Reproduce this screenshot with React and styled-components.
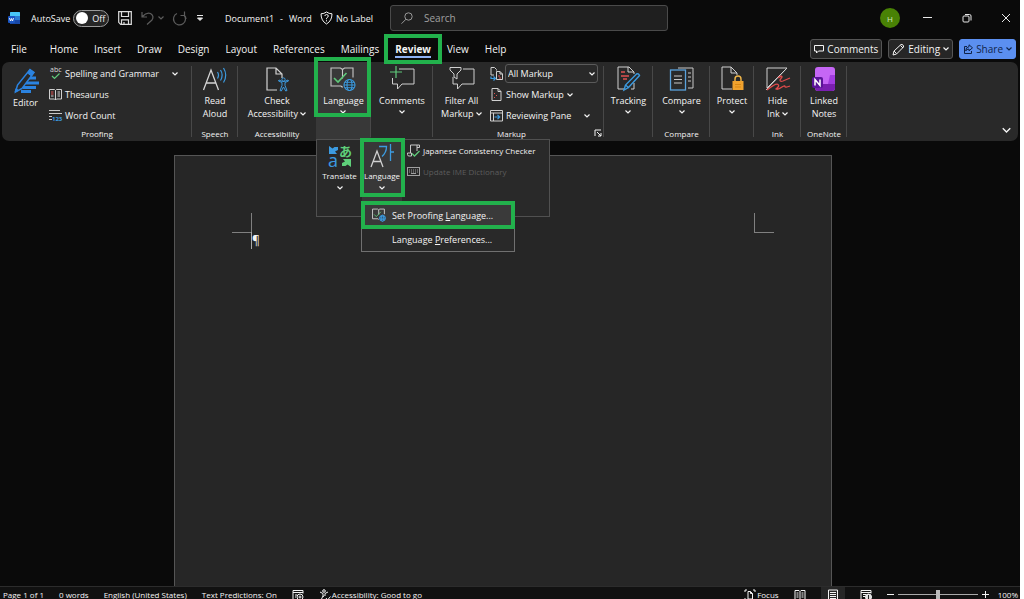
import styled, { createGlobalStyle } from "styled-components"

const TABS_BEFORE = ["Home", "Insert", "Draw", "Design", "Layout", "References", "Mailings"]
const TABS_AFTER = ["View", "Help"]

export default function App() {
  return (
    <>
      <GlobalStyle />
      <AppStyled>
        <TitleBar />
        <TabBar />
        <Ribbon />
        <Workspace>
          <Sheet>
            <Corner />
            <Paragraph>¶</Paragraph>
            <Corner $right />
          </Sheet>
        </Workspace>
        <StatusBar />
      </AppStyled>
    </>
  )
}

function TitleBar() {
  return (
    <TitleBarStyled>
      <QuickAccess>
        <WordLogo />
        <AutoSave>
          AutoSave
          <Toggle>
            <input type="checkbox" role="switch" />
            Off
          </Toggle>
        </AutoSave>
        <IconButton aria-label="Save"><SaveIcon /></IconButton>
        <IconButton aria-label="Undo" $dim>
          <UndoIcon />
          <Chevron />
        </IconButton>
        <IconButton aria-label="Redo" $dim><RedoIcon /></IconButton>
        <IconButton aria-label="Customize Quick Access Toolbar"><CustomizeIcon /></IconButton>
      </QuickAccess>
      <DocTitle>
        <span>Document1</span>
        <span>-</span>
        <span>Word</span>
      </DocTitle>
      <LabelButton><ShieldIcon />No Label</LabelButton>
      <SearchBox>
        <SearchIcon />
        <input type="text" placeholder="Search" aria-label="Search" />
      </SearchBox>
      <WindowControls>
        <Avatar aria-label="Account">H</Avatar>
        <IconButton aria-label="Minimize">
          <Svg w={10} h={10}><path d="M0 4.500h9" /></Svg>
        </IconButton>
        <IconButton aria-label="Restore">
          <Svg w={10} h={10}>
            <rect x="1" y="3" width="6" height="6" rx="1" />
            <path d="M3 1.5h4.5a1.5 1.5 0 0 1 1.5 1.5v4.5" />
          </Svg>
        </IconButton>
        <IconButton aria-label="Close">
          <Svg w={10} h={10}><path d="M1 1l8 8M9 1l-8 8" /></Svg>
        </IconButton>
      </WindowControls>
    </TitleBarStyled>
  )
}

function TabBar() {
  return (
    <TabBarStyled>
      <Tabs>
        <Tab $wide>File</Tab>
        {TABS_BEFORE.map((tab) => (
          <Tab key={tab}>{tab}</Tab>
        ))}
        <Tab $active>Review</Tab>
        {TABS_AFTER.map((tab) => (
          <Tab key={tab}>{tab}</Tab>
        ))}
      </Tabs>
      <TabActions>
        <ActionButton>
          <Svg w={10} h={10}><path d="M.5 1.5h9v5.5h-5l-2 2v-2h-2z" /></Svg>
          Comments
        </ActionButton>
        <ActionButton>
          <Svg w={13} h={13}><path d="M1 12l1-4 7-6.500q2-.5 2.500 1.500v1l-7 7zM8.500 2.500l2.500 2.500M2 8l2.500 2.500" /></Svg>
          Editing
          <Chevron />
        </ActionButton>
        <ActionButton $primary>
          <Svg w={10} h={10}><path d="M4 2.500h-2.500v7h7v-2.500M6 .8l3.500 3-3.500 3v-1.800q-2.500 0-3.300 2 0-4 3.300-4.300z" /></Svg>
          Share
          <Chevron />
        </ActionButton>
      </TabActions>
    </TabBarStyled>
  )
}

function Ribbon() {
  return (
    <RibbonStyled>
      <Group $width={190}>
        <GroupBody>
          <BigButton $width={47}><EditorIcon />Editor</BigButton>
          <SmallList>
            <SmallButton>
              <SpellingIcon />Spelling and Grammar
              <SplitArrow><Chevron /></SplitArrow>
            </SmallButton>
            <SmallButton><ThesaurusIcon />Thesaurus</SmallButton>
            <SmallButton><WordCountIcon />Word Count</SmallButton>
          </SmallList>
        </GroupBody>
        <GroupLabel>Proofing</GroupLabel>
      </Group>

      <Group $width={46}>
        <GroupBody>
          <BigButton><ReadAloudIcon /><span>Read</span><span>Aloud</span></BigButton>
        </GroupBody>
        <GroupLabel>Speech</GroupLabel>
      </Group>

      <Group $width={78} $plain>
        <GroupBody>
          <BigButton>
            <AccessibilityPageIcon />
            <span>Check</span>
            <span>Accessibility <Chevron /></span>
          </BigButton>
        </GroupBody>
        <GroupLabel>Accessibility</GroupLabel>
      </Group>

      <Group $width={55} $open>
        <GroupBody>
          <BigButton><ProofingIcon w={26} h={26} />Language<Chevron /></BigButton>
        </GroupBody>
        <Highlight $inset="-5px 0 22px -2px" />
        <LanguageFlyout />
      </Group>

      <Group $width={62}>
        <GroupBody><BigButton><NewCommentIcon />Comments<Chevron /></BigButton></GroupBody>
      </Group>

      <Group $width={171}>
        <GroupBody>
          <BigButton $width={57}>
            <FilterIcon />
            <span>Filter All</span>
            <span>Markup <Chevron /></span>
          </BigButton>
          <SmallList>
            <MarkupRow>
              <MarkupPagesIcon />
              <SelectBox>
                <select aria-label="Display for Review" defaultValue="all">
                  <option value="all">All Markup</option>
                </select>
                <Chevron />
              </SelectBox>
            </MarkupRow>
            <SmallButton><ShowMarkupIcon />Show Markup <Chevron /></SmallButton>
            <SmallButton>
              <PaneIcon />Reviewing Pane
              <SplitArrow><Chevron /></SplitArrow>
            </SmallButton>
          </SmallList>
        </GroupBody>
        <GroupLabel $launcher>
          Markup
          <Launcher aria-label="Change Tracking Options">
            <Svg w={8} h={8}><path d="M1 7v-6h6M3 3l4 4M7 4v3h-3" /></Svg>
          </Launcher>
        </GroupLabel>
      </Group>

      <Group $width={49}>
        <GroupBody><BigButton><TrackingIcon />Tracking<Chevron /></BigButton></GroupBody>
      </Group>
      <Group $width={57}>
        <GroupBody><BigButton><CompareIcon />Compare<Chevron /></BigButton></GroupBody>
        <GroupLabel>Compare</GroupLabel>
      </Group>
      <Group $width={44}>
        <GroupBody><BigButton><ProtectIcon />Protect<Chevron /></BigButton></GroupBody>
      </Group>
      <Group $width={47}>
        <GroupBody>
          <BigButton><InkIcon /><span>Hide</span><span>Ink <Chevron /></span></BigButton>
        </GroupBody>
        <GroupLabel>Ink</GroupLabel>
      </Group>
      <Group $width={46}>
        <GroupBody>
          <BigButton><OneNoteIcon /><span>Linked</span><span>Notes</span></BigButton>
        </GroupBody>
        <GroupLabel>OneNote</GroupLabel>
      </Group>

      <Collapse aria-label="Collapse the Ribbon"><Chevron size={9} /></Collapse>
    </RibbonStyled>
  )
}

function LanguageFlyout() {
  return (
    <Flyout>
      <FlyoutButton $width={45}><TranslateIcon />Translate<Chevron /></FlyoutButton>
      <FlyoutAnchor>
        <FlyoutButton $width={40} $open><LanguageIcon />Language<Chevron /></FlyoutButton>
        <Highlight $inset="-2px -3px 19px -2px" />
        <Menu>
          <MenuItem $active>
            <ProofingIcon w={14} h={14} />
            <span>Set Proofing <u>L</u>anguage...</span>
            <Highlight $inset="-1px" />
          </MenuItem>
          <MenuItem>
            <i />
            <span>Language <u>P</u>references...</span>
          </MenuItem>
        </Menu>
      </FlyoutAnchor>
      <FlyoutList>
        <FlyoutItem>
          <Svg w={13} h={13} color="#c8c8c8">
            <path d="M3.500 9v-8h9v2.500h-2.500M10 1v6M.5 9h4v3h-2.500q-1.500 0-1.500-1.500z" />
            <path d="M5 9.500l2.500 2.500 5-5" stroke="#5fc97a" strokeWidth="1.300" />
          </Svg>
          Japanese Consistency Checker
        </FlyoutItem>
        <FlyoutItem disabled>
          <Svg w={13} h={13} color="#a0a0a0">
            <rect x=".5" y="2.500" width="12" height="8" />
            <path d="M2 5h1M4 5h1M6 5h1M8 5h1M10 5h1M2 7h1M4 7h1M6 7h1M8 7h1M10 7h1M4 8.500h5" />
          </Svg>
          Update IME Dictionary
        </FlyoutItem>
      </FlyoutList>
    </Flyout>
  )
}

function StatusBar() {
  return (
    <StatusBarStyled>
      <StatusInner>
        <StatusButton>Page 1 of 1</StatusButton>
        <StatusButton>0 words</StatusButton>
        <StatusButton>English (United States)</StatusButton>
        <StatusButton>Text Predictions: On</StatusButton>
        <StatusButton aria-label="Macro recording">
          <Svg w={12} h={12}>
            <path d="M4 11h-3v-9.500h10v3M1 3.500h10M3 6h2M3 8h1" />
            <circle cx="8" cy="8" r="3" /><circle cx="8" cy="8" r="1" />
          </Svg>
        </StatusButton>
        <StatusButton>
          <Svg w={12} h={12}>
            <circle cx="5" cy="2" r="1.300" />
            <path d="M1 3l3 1.500v2.500l-2 4M9 3l-3 1.500v2.500M4 8l1-1.500M7 9l1.500 2 3-3.500" />
          </Svg>
          Accessibility: Good to go
        </StatusButton>
        <StatusRight>
          <StatusButton>
            <Svg w={12} h={12}>
              <path d="M1 3v-2h2M9 1h2v2M1 9v2h2M4 2.500h2.500l2 2v5.500h-4.500zM6.500 2.500v2h2" />
            </Svg>
            Focus
          </StatusButton>
          <ViewButton aria-label="Read Mode">
            <Svg w={12} h={12}>
              <path d="M6 2.500v8M1 1.500h4l1 1 1-1h4v9h-4l-1 .5-1-.5h-4zM2.500 4h2M2.500 6h2M2.500 8h2M7.500 4h2M7.500 6h2M7.500 8h2" />
            </Svg>
          </ViewButton>
          <ViewButton aria-label="Print Layout" $active>
            <Svg w={12} h={12}>
              <path d="M1.500 1h9v10h-9zM3 3.500h6M3 5.500h6M3 7.500h6M3 9.500h6" />
            </Svg>
          </ViewButton>
          <ViewButton aria-label="Web Layout">
            <Svg w={12} h={12}>
              <path d="M5 10.500h-4v-9h10v3M1 3.500h10M3 5.500h3M3 7.500h2" />
              <circle cx="8.500" cy="8" r="3" fill="#ddd" />
              <path d="M8.500 6v4" stroke="#222" />
            </Svg>
          </ViewButton>
          <Zoom>
            <button aria-label="Zoom out"><Svg w={7} h={7}><path d="M0 3.500h7" /></Svg></button>
            <input type="range" min="10" max="190" defaultValue="100" aria-label="Zoom" />
            <button aria-label="Zoom in"><Svg w={7} h={7}><path d="M0 3.500h7M3.500 0v7" /></Svg></button>
          </Zoom>
          <StatusButton>100%</StatusButton>
        </StatusRight>
      </StatusInner>
    </StatusBarStyled>
  )
}

// icons

function Svg({ w, h, color = "currentColor", children }) {
  return (
    <svg width={w} height={h} viewBox={`0 0 ${w} ${h}`} fill="none" stroke={color} aria-hidden="true">
      {children}
    </svg>
  )
}

function Chevron({ size = 6 }) {
  return (
    <svg width={size} height={size} viewBox="0 0 6 6" fill="none" stroke="currentColor" strokeWidth={size > 6 ? 0.9 : 1.2} aria-hidden="true">
      <path d="M.5 1.500l2.500 2.500 2.500-2.500" />
    </svg>
  )
}

function WordLogo() {
  return (
    <svg width="14" height="14" viewBox="0 0 14 14" aria-label="Word">
      <rect x="2" y="1" width="10" height="12" rx="1" fill="#2b7cd3" />
      <path d="M2 2q0-1 1-1h8q1 0 1 1v3h-10z" fill="#48c6f7" />
      <path d="M2 9h10v3q0 1-1 1h-8q-1 0-1-1z" fill="#1747a6" />
      <rect x="0" y="5" width="7" height="7" rx="1" fill="#1a56c4" />
      <path d="M1.500 7l1 3 1-2.500 1 2.500 1-3" fill="none" stroke="#fff" strokeWidth=".9" />
    </svg>
  )
}

function SaveIcon() {
  return (
    <Svg w={14} h={14} color="#ddd">
      <path d="M.7.7h12.600v12.600h-10.600l-2-2zM3.500.7v4.800h7v-4.800M3.500 13.300v-4.500h7v4.500M6 11v2" strokeWidth="1.200" />
    </Svg>
  )
}

function UndoIcon() {
  return (
    <Svg w={13} h={14}>
      <path d="M1 1v5h5M1.500 5.500q4-4.500 8-3 4 2.500 1.500 6.500l-5 4.500" strokeWidth="1.200" />
    </Svg>
  )
}

function RedoIcon() {
  return (
    <Svg w={14} h={14}>
      <path d="M11.500 .5v4h-4M11 4a6 6 0 1 1-7-1.500M11 4q2 1.500 2 4" strokeWidth="1.200" />
    </Svg>
  )
}

function CustomizeIcon() {
  return (
    <Svg w={8} h={8}>
      <path d="M1 1.500h6" />
      <path d="M1.500 4l2.500 2.500 2.500-2.500z" fill="currentColor" />
    </Svg>
  )
}

function ShieldIcon() {
  return (
    <Svg w={13} h={14}>
      <path d="M6.500 1q2.500 1.800 5.500 1.800 0 7-5.500 10.200-5.500-3.200-5.500-10.200 3 0 5.500-1.800z" />
      <path d="M4.800 5q.3-1.500 1.800-1.500t1.700 1.500q0 1-1.800 2.200v1M6.500 9.200v1.200" />
    </Svg>
  )
}

function SearchIcon() {
  return (
    <Svg w={12} h={12} color="#9a9a9a">
      <circle cx="7.500" cy="4.500" r="3.700" />
      <path d="M5 7.200l-4.500 4.500" />
    </Svg>
  )
}

function EditorIcon() {
  return (
    <Svg w={26} h={26} color="#2b83e0">
      <path d="M15 10h8M13 15h13M10 19.500h13M8 23.500h10" strokeWidth="3" />
      <path d="M17 1.500l4 3-12 16-6.500 3.500 2-7z" fill="#292929" strokeWidth="1.500" />
      <path d="M17 1.500l4 3-2.500 3.500-4-3zM2 24l1-3.500 2.500 2z" fill="#2b83e0" />
    </Svg>
  )
}

function SpellingIcon() {
  return (
    <Svg w={13} h={13}>
      <text x="1" y="5" fontSize="7" fill="#ddd" stroke="none">abc</text>
      <path d="M3 9l2.500 2.500 5-5" stroke="#5fc97a" strokeWidth="1.200" />
    </Svg>
  )
}

function ThesaurusIcon() {
  return (
    <Svg w={13} h={13} color="#d0d0d0">
      <path d="M.5 1.500h5l1 1 1-1h5v9.500h-5l-1 1-1-1h-5zM6.500 2.500v9.500M8.500 4h2.500M8.500 6h2.500M8.500 8h2.500M2 8h2.500" />
      <path d="M2 4h2.500M2 6h2.500" stroke="#e05252" />
    </Svg>
  )
}

function WordCountIcon() {
  return (
    <Svg w={13} h={13}>
      <path d="M0 1.500h11M0 4.500h13M0 7.500h3M0 10.500h3" stroke="#c8c8c8" />
      <text x="3" y="12" fontSize="6" fontWeight="700" fill="#3c9be0" stroke="none">123</text>
    </Svg>
  )
}

function ReadAloudIcon() {
  return (
    <Svg w={26} h={26}>
      <path d="M1.500 24l7.500-20 7.500 20M4.300 17h9.500" stroke="#d4d4d4" strokeWidth="1.300" />
      <path d="M15.500 6q2 3 0 6.500M18.500 4q3.300 5 0 10.500M21.500 2q4.500 7 0 14.500" stroke="#3c9be0" strokeWidth="1.200" />
    </Svg>
  )
}

function AccessibilityPageIcon() {
  return (
    <Svg w={26} h={26}>
      <path d="M13 24h-10v-22h9l6 6v4M12 2v6h6" stroke="#d4d4d4" strokeWidth="1.200" />
      <circle cx="19.500" cy="13.500" r="1.600" stroke="#3c9be0" />
      <path d="M14.500 15l3.500 1.500v3l-2 5 1.300.5 2.200-4 2.200 4 1.300-.5-2-5v-3l3.500-1.500-.5-1-3.300 1.500h-2.400l-3.300-1.500z" stroke="#3c9be0" />
    </Svg>
  )
}

function ProofingIcon({ w, h }) {
  return (
    <svg width={w} height={h} viewBox="0 0 26 26" fill="none" stroke="#c8c8c8" strokeWidth={w > 20 ? 1.1 : 1.8} aria-hidden="true">
      <path d="M13 21h-1l-1-1h-10v-18h9.500l2 1.500 2-1.500h8.500v9.500M12.500 3.500v9" />
      <path d="M4 12l4 4 8.500-9" stroke="#5fc97a" strokeWidth="1.600" />
      <g stroke="#3c9be0">
        <circle cx="19.500" cy="19" r="5.500" fill="#292929" />
        <ellipse cx="19.500" cy="19" rx="2.500" ry="5.500" />
        <path d="M14 19h11M15 16.300h9M15 21.700h9" />
      </g>
    </svg>
  )
}

function NewCommentIcon() {
  return (
    <Svg w={26} h={26}>
      <path d="M10 3h15v15h-12l-4.500 5v-5h-5v-6" stroke="#d0d0d0" />
      <path d="M7 0v12M1 6h12" stroke="#5fc97a" strokeWidth="1.200" />
    </Svg>
  )
}

function FilterIcon() {
  return (
    <Svg w={26} h={26} color="#d0d0d0">
      <path d="M14 3h11v15h-12l-4.500 5v-5h-4.500v-7" />
      <path d="M1 1.500h11v2.500l-4 4v5l-3-2v-3l-4-4z" />
    </Svg>
  )
}

function MarkupPagesIcon() {
  return (
    <Svg w={13} h={13} color="#d0d0d0">
      <path d="M4 8h-3v-7.500h3.500l2 2v1" />
      <path d="M6.500 4.500h3.500l2.500 2.500v5.500h-6zM10 4.500v2.500h2.500" />
      <path d="M8 9h2M9 11h2" stroke="#e05252" />
      <path d="M1 9.500v2h4M3.500 9.500l2 2-2 2" stroke="#3c9be0" strokeWidth="1.200" />
    </Svg>
  )
}

function ShowMarkupIcon() {
  return (
    <Svg w={13} h={13} color="#d0d0d0">
      <path d="M2 .5h6l3 3v9h-9zM8 .5v3h3" />
      <path d="M4 5.500h1M6 7.500h1M4 9.500h1" stroke="#e05252" />
    </Svg>
  )
}

function PaneIcon() {
  return (
    <Svg w={13} h={13} color="#d0d0d0">
      <path d="M.5 1.500h12v10.500h-12zM.5 4h12M3.500 4v8" />
      <path d="M4.500 8h5M7.500 5.800l2.200 2.200-2.200 2.200" stroke="#3c9be0" strokeWidth="1.200" />
    </Svg>
  )
}

function TrackingIcon() {
  return (
    <Svg w={26} h={26}>
      <path d="M9 23h-6v-22h11l5 5v2M13 1v5h6M19 17v6h-3" stroke="#d0d0d0" />
      <path d="M6 6h4M6 10h8M8 13h4" stroke="#e05252" strokeWidth="1.300" />
      <path d="M9 24l1.500-5 11-11q2-1 3 1.500l-11 12zM10.500 19l3.500 3" stroke="#3c9be0" fill="#292929" strokeWidth="1.400" />
    </Svg>
  )
}

function CompareIcon() {
  return (
    <Svg w={26} h={26}>
      <path d="M9 2h15v20h-5M19 7h3M19 11h3M19 15h3" stroke="#c8c8c8" />
      <rect x="1.500" y="4" width="15" height="20" stroke="#5aa2dc" strokeWidth="1.300" />
      <path d="M5 10h8M5 13.500h8M5 17h8" stroke="#c8c8c8" />
    </Svg>
  )
}

function ProtectIcon() {
  return (
    <Svg w={26} h={26}>
      <path d="M13 23h-10v-22h9l6 6v2M12 1v6h6" stroke="#d0d0d0" />
      <path d="M16 15v-2q0-3 3-3t3 3v2" stroke="#f2b84b" strokeWidth="1.400" />
      <rect x="13.500" y="15" width="11" height="9" fill="#f0a22e" stroke="none" />
      <path d="M16 18.500h6M16 21h6" stroke="#d98712" />
    </Svg>
  )
}

function InkIcon() {
  return (
    <Svg w={26} h={26}>
      <path d="M22 2h-20v20zM22 2l-21 22" stroke="#d0d0d0" />
      <path d="M13 12q4-3 4-1l-2 3q0 2 3 1l7-3M2 24q9-7 11-5.500t-2 4.500q2 1 6-2 3-2 3-.5t5-.5" stroke="#e04b4b" strokeWidth="1.300" />
    </Svg>
  )
}

function OneNoteIcon() {
  return (
    <Svg w={26} h={26} color="none">
      <rect x="4" y="1" width="20" height="24" rx="3" fill="#c566f5" />
      <path d="M19 9h5v9h-7z" fill="#a23be0" />
      <path d="M4 18h20v4q0 3-3 3h-14q-3 0-3-3z" fill="#7a1fb0" />
      <rect x="1" y="11" width="11" height="11" rx="2" fill="#5b1499" />
      <path d="M4 19.500v-6l5 6v-6" stroke="#fff" strokeWidth="1.500" />
    </Svg>
  )
}

function TranslateIcon() {
  return (
    <Svg w={24} h={24} color="none">
      <path d="M1 2v8h8l-2-2.500 3-1.500v-3h-3.500l-2 1.500z" fill="#3c9be0" />
      <text x="0" y="23" fontSize="18" fill="#3c9be0">a</text>
      <text x="11" y="12" fontSize="13" fontWeight="700" fill="#5fd07a">あ</text>
      <path d="M23 23v-8h-8l2 2.500-3 1.500v3h3.500l2-1.500z" fill="#5fd07a" />
    </Svg>
  )
}

function LanguageIcon() {
  return (
    <Svg w={24} h={24}>
      <path d="M1 23l6-16 6 16M3.200 17.500h7.600" stroke="#d0d0d0" strokeWidth="1.300" />
      <path d="M9 2.500h7.500q0 6-4.500 10M20.500 0v17M20.500 8h3.500" stroke="#3c9be0" strokeWidth="1.300" />
    </Svg>
  )
}

// styles

const GlobalStyle = createGlobalStyle`
  * {
    box-sizing: border-box;
  }

  body {
    margin: 0;
    background: #fff;
    font-family: "Open Sans", "Noto Sans", "Noto Sans CJK JP", sans-serif;
    font-size: 9px;
    color: #f4f4f4;
  }

  button, input, select {
    margin: 0;
    padding: 0;
    border: 0;
    background: none;
    color: inherit;
    font: inherit;
  }

  svg {
    flex: none;
    overflow: visible;
  }
`

const AppStyled = styled.div`
  display: flex;
  flex-direction: column;
  height: 100vh;
  margin-right: 4px;
  overflow: hidden;
  background: #0a0a0a;
`

const TitleBarStyled = styled.header`
  display: flex;
  align-items: center;
  height: 36px;
  padding: 0 9px 0 8px;
`

const QuickAccess = styled.div`
  display: flex;
  align-items: center;
  gap: 9px;
  flex: 0 0 217px;
`

const AutoSave = styled.label`
  display: flex;
  align-items: center;
  gap: 3px;
`

const Toggle = styled.span`
  display: flex;
  align-items: center;
  gap: 4px;
  width: 36px;
  height: 17px;
  padding-left: 2px;
  border: 1px solid #999;
  border-radius: 9px;
  background: #262626;

  input {
    appearance: none;
    width: 12px;
    height: 12px;
    border-radius: 50%;
    background: #fff;
  }
`

const IconButton = styled.button`
  display: flex;
  align-items: center;
  gap: 4px;
  color: ${({ $dim }) => ($dim ? "#5c5c5c" : "#e8e8e8")};
`

const DocTitle = styled.div`
  display: flex;
  gap: 6px;
  flex: 0 0 95px;
`

const LabelButton = styled.button`
  display: flex;
  align-items: center;
  gap: 3px;
  flex: 0 0 70px;
`

const SearchBox = styled.div`
  display: flex;
  align-items: center;
  gap: 11px;
  flex: 0 1 278px;
  height: 26px;
  padding: 0 10px;
  border: 1px solid #4a4a4a;
  border-radius: 3px;
  background: #1f1f1f;
  font-size: 10px;

  input {
    flex: 1;
    min-width: 0;
  }

  input::placeholder {
    color: #a0a0a0;
  }
`

const WindowControls = styled.div`
  display: flex;
  align-items: center;
  gap: 29px;
  margin-left: auto;
`

const Avatar = styled.button`
  width: 20px;
  height: 20px;
  margin-right: -6px;
  border-radius: 50%;
  background: #498205;
  color: #d5e8bf;
  font-size: 8px;
`

const TabBarStyled = styled.div`
  display: flex;
  justify-content: space-between;
  height: 26px;
  padding: 0 4px 0 3px;
`

const Tabs = styled.nav`
  display: flex;
  align-items: center;
`

const Tab = styled.button`
  position: relative;
  height: 22px;
  margin-right: ${({ $wide }) => ($wide ? "7px" : "0")};
  padding: 0 8px;
  font-size: 10px;
  font-weight: ${({ $active }) => ($active ? 700 : 400)};

  ${({ $active }) =>
    $active &&
    `
    &::before {
      content: "";
      position: absolute;
      left: 8px;
      right: 8px;
      bottom: 2px;
      height: 2px;
      background: #8fb2f5;
    }

    &::after {
      content: "";
      position: absolute;
      z-index: 2;
      inset: -4px -3px;
      border: 4px solid #22b14c;
    }
  `}
`

const TabActions = styled.div`
  display: flex;
  align-items: center;
  gap: 6px;
`

const ActionButton = styled.button`
  display: flex;
  align-items: center;
  gap: 3px;
  height: 20px;
  padding: 0 3px;
  border: 1px solid ${({ $primary }) => ($primary ? "#5b8ff0" : "#555")};
  border-radius: 3px;
  background: ${({ $primary }) => ($primary ? "#5b8ff0" : "#262626")};
  color: ${({ $primary }) => ($primary ? "#10244a" : "#f4f4f4")};
  font-size: 10px;
`

const RibbonStyled = styled.div`
  position: relative;
  z-index: 1;
  display: flex;
  flex: none;
  height: 79px;
  margin: 0 2px;
  border-radius: 7px;
  background: #292929;
`

const Group = styled.section`
  position: relative;
  display: flex;
  flex-direction: column;
  justify-content: space-between;
  flex: 0 0 ${({ $width }) => $width}px;
  min-width: 0;
  height: 77px;
  background: ${({ $open }) => ($open ? "#383838" : "none")};

  &::after {
    content: "";
    position: absolute;
    top: 4px;
    right: 0;
    bottom: 2px;
    width: 1px;
    background: ${({ $plain }) => ($plain ? "none" : "#484848")};
  }
`

const GroupBody = styled.div`
  display: flex;
  justify-content: center;
  align-items: flex-start;
`

const GroupLabel = styled.div`
  display: flex;
  align-items: center;
  height: 12px;
  padding-left: ${({ $launcher }) => ($launcher ? "64px" : "0")};
  justify-content: ${({ $launcher }) => ($launcher ? "space-between" : "center")};
  font-size: 8px;
`

const Launcher = styled.button`
  display: flex;
  margin-right: 2px;
`

const BigButton = styled.button`
  display: flex;
  flex-direction: column;
  align-items: center;
  flex: ${({ $width }) => ($width ? `0 0 ${$width}px` : "none")};
  padding-top: 4px;
  line-height: 13px;
  white-space: nowrap;

  > svg:first-child {
    margin-bottom: 2px;
  }

  > svg:last-child {
    margin-top: 2px;
  }
`

const SmallList = styled.div`
  display: flex;
  flex-direction: column;
  flex: 1;
  padding-top: 1px;
`

const SmallButton = styled.button`
  display: flex;
  align-items: center;
  gap: 3px;
  height: 21px;
  white-space: nowrap;
`

const SplitArrow = styled.span`
  display: flex;
  margin-left: 10px;
`

const MarkupRow = styled.div`
  display: flex;
  align-items: center;
  gap: 2px;
  height: 21px;
`

const SelectBox = styled.span`
  display: flex;
  align-items: center;
  height: 19px;
  flex: 1;
  margin-right: 6px;
  padding: 0 2px;
  border: 1px solid #5a5a5a;
  border-radius: 3px;

  select {
    appearance: none;
    flex: 1;
  }
`

const Collapse = styled.button`
  display: flex;
  align-self: flex-end;
  margin: 0 7px 6px auto;
`

const Highlight = styled.span`
  position: absolute;
  z-index: 2;
  inset: ${({ $inset }) => $inset};
  border: 4px solid #22b14c;
  pointer-events: none;
`

const Flyout = styled.div`
  position: absolute;
  z-index: 3;
  top: 77px;
  left: 0;
  display: flex;
  width: 234px;
  height: 78px;
  border: 1px solid #505050;
  background: #292929;
  font-size: 8px;
`

const FlyoutAnchor = styled.div`
  position: relative;
`

const FlyoutButton = styled.button`
  display: flex;
  flex-direction: column;
  align-items: center;
  width: ${({ $width }) => $width}px;
  height: ${({ $open }) => ($open ? "62px" : "auto")};
  padding-top: 4px;
  line-height: 12px;
  background: ${({ $open }) => ($open ? "#383838" : "none")};

  > svg:first-child {
    margin-bottom: 2px;
  }

  > svg:last-child {
    margin-top: 3px;
  }
`

const FlyoutList = styled.div`
  display: flex;
  flex-direction: column;
  padding-left: 5px;
`

const FlyoutItem = styled.button`
  display: flex;
  align-items: center;
  gap: 3px;
  height: 21px;
  white-space: nowrap;

  &:disabled {
    color: #5c5c5c;
  }
`

const Menu = styled.div`
  position: absolute;
  top: 61px;
  left: -1px;
  width: 154px;
  border: 1px solid #707070;
  background: #292929;
  font-size: 9px;
`

const MenuItem = styled.button`
  position: relative;
  display: flex;
  align-items: center;
  gap: 6px;
  width: 100%;
  height: ${({ $active }) => ($active ? "26px" : "23px")};
  padding-left: 10px;
  background: ${({ $active }) => ($active ? "#3a3a3a" : "none")};

  i {
    width: 14px;
  }
`

const Workspace = styled.main`
  display: flex;
  justify-content: center;
  flex: 1;
  min-height: 0;
  padding: 14px 14px 0 0;
`

const Sheet = styled.article`
  display: flex;
  width: 65.4%;
  padding: 57px 57px 0;
  border: 1px solid #555;
  border-bottom: 0;
  background: #262626;
`

const Corner = styled.span`
  width: 20px;
  height: 20px;
  margin-left: ${({ $right }) => ($right ? "auto" : "0")};
  border: solid #808080;
  border-width: ${({ $right }) => ($right ? "0 0 1px 1px" : "0 1px 1px 0")};
`

const Paragraph = styled.span`
  margin: 19px 0 0 -1px;
  border-left: 1px solid #aaa;
  font-size: 12px;
  line-height: 17px;
  height: 17px;
`

const StatusBarStyled = styled.footer`
  flex: none;
  height: 13px;
  overflow: hidden;
  border-top: 1px solid #2c2c2c;
  background: #111;
  font-size: 8px;
  line-height: 9px;
`

const StatusInner = styled.div`
  display: flex;
  align-items: center;
  gap: 15px;
  height: 15px;
  padding: 0 2px 0 3px;
`

const StatusButton = styled.button`
  display: flex;
  align-items: center;
  gap: 1px;
  white-space: nowrap;
`

const StatusRight = styled.div`
  display: flex;
  align-items: center;
  gap: 9px;
  height: 100%;
  margin-left: auto;
`

const ViewButton = styled.button`
  display: flex;
  align-items: center;
  justify-content: center;
  width: 24px;
  height: 100%;
  background: ${({ $active }) => ($active ? "#262626" : "none")};
`

const Zoom = styled.div`
  display: flex;
  align-items: center;
  gap: 4px;

  button {
    display: flex;
  }

  input {
    appearance: none;
    width: 80px;
    height: 1px;
    background: #aaa;
  }

  input::-webkit-slider-thumb {
    appearance: none;
    width: 4px;
    height: 10px;
    background: #bbb;
  }
`
